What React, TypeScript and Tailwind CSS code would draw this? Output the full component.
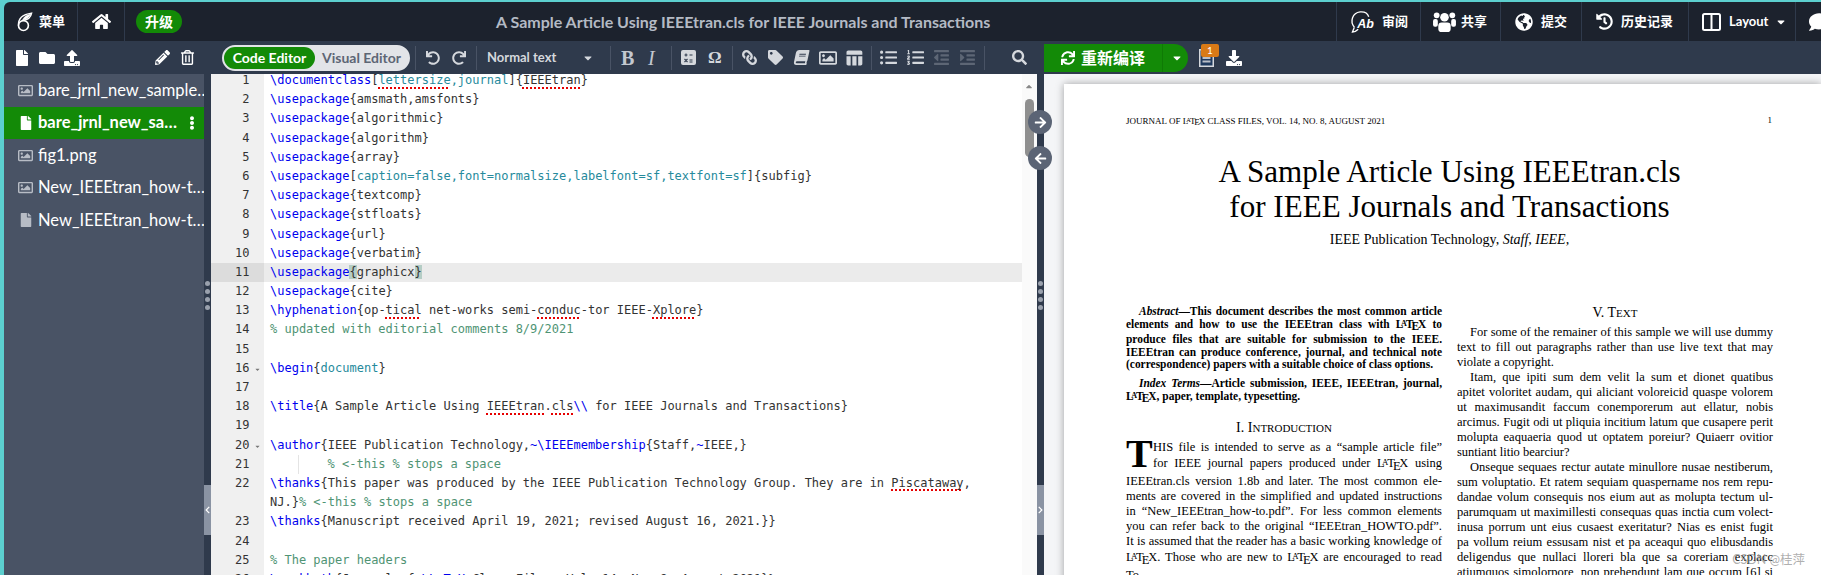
import React from 'react';
import {
  FaFile, FaFolder, FaUpload, FaPencilAlt, FaRegTrashAlt, FaHome, FaUndo, FaRedo, FaCaretDown, FaLink, FaTag, FaBook,
  FaRegImage, FaListUl, FaListOl, FaOutdent, FaIndent, FaSearch, FaSync, FaDownload, FaGlobeAmericas,
  FaHistory, FaComment, FaEllipsisV, FaArrowRight, FaArrowLeft, FaChevronLeft, FaChevronRight,
} from 'react-icons/fa';
import { MdTableChart } from 'react-icons/md';

function Logo() {
  return (
    <svg viewBox="0 0 24 28" className="w-[17px] h-[20px]" fill="none" stroke="white">
      <circle cx="10.500" cy="19" r="7" strokeWidth="2.300" />
      <path d="M3.500 19C3 11 8 3.500 22 1.500C21 7 17 11 10 11.500" strokeWidth="2" />
      <path d="M21 2.500C15 4 11 7 9 11C14 11 19 8 21 2.500Z" fill="white" strokeWidth="0.500" />
    </svg>
  );
}

function ReviewIcon() {
  return (
    <svg viewBox="0 0 27 24" className="w-[27px] h-[23px]" fill="none">
      <path d="M5 18C0 12 3 3 11 2C16 1.500 19 4 20 7M5 18L3 23C6 23 8 21 9 20" stroke="white" strokeWidth="1.400" />
      <text x="8" y="19" fill="white" fontSize="13" fontFamily="'Liberation Sans', sans-serif" fontStyle="italic">Ab</text>
    </svg>
  );
}

function UsersIcon() {
  return (
    <svg viewBox="0 0 24 22" className="w-[23px] h-[21px]" fill="white">
      <circle cx="12" cy="6.500" r="4.500" />
      <circle cx="3.800" cy="4.500" r="3" />
      <circle cx="20.200" cy="4.500" r="3" />
      <rect x="5.500" y="12" width="13" height="10" rx="3.500" />
      <rect x="0" y="8.500" width="5" height="8" rx="2" />
      <rect x="19" y="8.500" width="5" height="8" rx="2" />
    </svg>
  );
}

function ColumnsIcon() {
  return (
    <svg viewBox="0 0 19 18" className="w-[19px] h-[18px]" fill="none" stroke="white" strokeWidth="2">
      <rect x="1" y="1" width="17" height="16" rx="1.500" />
      <path d="M9.500 1v16" />
    </svg>
  );
}

function MathIcon() {
  return (
    <svg viewBox="0 0 15 15" className="w-[15px] h-[15px]">
      <rect width="15" height="15" rx="2" fill="#d5d8dd" />
      <path d="M3.500 5h3M5 3.500v3M8.500 5h3M3.500 9l3 3M6.500 9l-3 3M8.500 10h3M8.500 12h3" stroke="#2f3a4c" strokeWidth="1.100" />
    </svg>
  );
}

function LogsIcon() {
  return (
    <svg viewBox="0 0 15 18" className="w-[15px] h-[18px]">
      <rect x="0.750" y="0.750" width="13.500" height="16.500" fill="#1f3a5f" stroke="#d5d8dd" strokeWidth="1.500" />
      <path d="M3.500 9h8M3.500 12.500h8" stroke="#b9bec7" strokeWidth="2" />
    </svg>
  );
}

function NavItem({ w, icon, label }: { w: string; icon: React.ReactNode; label: React.ReactNode }) {
  return (
    <div className={`${w} shrink-0 h-full border-l border-[#2f3a4c] flex items-center pl-[12px] text-white text-[13px] font-bold`}>
      {icon}
      {label}
    </div>
  );
}

function TopBar() {
  return (
    <div className="h-[39px] shrink-0 bg-[#1c222d] flex items-center text-white rounded-tl-[6px]">
      <div className="w-[74px] h-full border-r border-[#2f3a4c] flex items-center pl-[12px] gap-[6px]">
        <Logo />
        <span className="text-[13px] font-bold">菜单</span>
      </div>
      <div className="w-[47px] h-full border-r border-[#2f3a4c] flex items-center justify-center">
        <FaHome className="text-[19px]" />
      </div>
      <div className="ml-[11px] w-[46px] h-[23px] rounded-full bg-[#138a07] flex items-center justify-center text-[14px] font-bold">升级</div>
      <div className="ml-[314px] text-[16px] font-bold text-[#b4bac4] whitespace-nowrap">A Sample Article Using IEEEtran.cls for IEEE Journals and Transactions</div>
      <div className="ml-auto flex h-full">
        <NavItem w="w-[84px]" icon={<ReviewIcon />} label={<span className="ml-[6px]">审阅</span>} />
        <NavItem w="w-[80px]" icon={<UsersIcon />} label={<span className="ml-[5px]">共享</span>} />
        <NavItem w="w-[81px]" icon={<FaGlobeAmericas className="text-[18px] ml-[2px]" />} label={<span className="ml-[8px]">提交</span>} />
        <NavItem w="w-[107px]" icon={<FaHistory className="text-[17px] ml-[2px]" />} label={<span className="ml-[8px]">历史记录</span>} />
        <NavItem w="w-[107px]" icon={<span className="ml-[1px] flex"><ColumnsIcon /></span>} label={<><span className="ml-[8px]">Layout</span><FaCaretDown className="ml-[7px] text-[12px]" /></>} />
        <div className="w-[26px] shrink-0 h-full border-l border-[#2f3a4c] flex items-center pl-[13px] text-white overflow-hidden">
          <FaComment className="text-[20px] shrink-0" />
        </div>
      </div>
    </div>
  );
}

function Sep({ ml }: { ml: string }) {
  return <div className={`${ml} w-px h-[24px] bg-[#495365] shrink-0`} />;
}

function ToolBar() {
  const tone = 'text-[#d5d8dd] shrink-0';
  return (
    <div className="h-[33px] shrink-0 bg-[#2f3a4c] flex items-center">
      <div className="w-[207px] shrink-0 flex items-center text-white pl-[10px]">
        <FaFile className="text-[16px]" />
        <FaFolder className="text-[16px] ml-[9px]" />
        <FaUpload className="text-[16px] ml-[9px]" />
        <FaPencilAlt className="text-[15px] ml-[75px]" />
        <FaRegTrashAlt className="text-[15px] ml-[10px]" />
      </div>
      <div className="w-[833px] shrink-0 flex items-center pl-[11px]">
        <div className="w-[188px] h-[26px] rounded-full bg-[#e2e4e8] flex items-center text-[14px] font-bold shrink-0 border-2 border-[#e2e4e8]">
          <div className="w-[91px] h-full rounded-full bg-[#138a07] text-white flex items-center justify-center">Code Editor</div>
          <div className="flex-1 text-[#5d6675] text-center">Visual Editor</div>
        </div>
        <Sep ml="ml-[5px]" />
        <FaUndo className={`${tone} text-[14px] ml-[10px]`} />
        <FaRedo className={`${tone} text-[14px] ml-[12px]`} />
        <Sep ml="ml-[10px]" />
        <span className="ml-[10px] text-[13px] font-bold text-[#d5d8dd] w-[69px] whitespace-nowrap">Normal text</span>
        <FaCaretDown className={`${tone} text-[12px] ml-[26px]`} />
        <Sep ml="ml-[16px]" />
        <span className="ml-[10px] w-[16px] text-[20px] font-bold text-[#c3c7cf] [font-family:'Liberation_Serif',serif]">B</span>
        <span className="ml-[11px] w-[12px] text-[20px] italic text-[#c3c7cf] [font-family:'Liberation_Serif',serif]">I</span>
        <Sep ml="ml-[11px]" />
        <div className="ml-[9px] shrink-0"><MathIcon /></div>
        <span className="ml-[12px] w-[14px] text-[17px] font-bold text-[#d5d8dd] [font-family:'Liberation_Serif',serif]">Ω</span>
        <Sep ml="ml-[10px]" />
        <FaLink className={`${tone} text-[15px] ml-[9px] -scale-x-100`} />
        <FaTag className={`${tone} text-[15px] ml-[11px]`} />
        <FaBook className={`${tone} text-[15px] ml-[11px] -skew-x-12`} />
        <FaRegImage className={`${tone} text-[18px] ml-[10px]`} />
        <MdTableChart className={`${tone} text-[20px] ml-[7px]`} />
        <Sep ml="ml-[7px]" />
        <FaListUl className={`${tone} text-[17px] ml-[8px]`} />
        <FaListOl className={`${tone} text-[17px] ml-[10px]`} />
        <FaOutdent className="text-[#5d6675] text-[17px] ml-[9px] shrink-0" />
        <FaIndent className="text-[#5d6675] text-[17px] ml-[9px] shrink-0" />
        <Sep ml="ml-[8px]" />
        <FaSearch className={`${tone} text-[15px] ml-[27px]`} />
      </div>
      <div className="flex-1 flex items-center">
        <div className="w-[144px] h-[28px] bg-[#138a07] rounded-r-full flex items-center text-white shrink-0">
          <FaSync className="ml-[17px] text-[14px]" />
          <span className="ml-[6px] w-[66px] text-[16px] font-bold whitespace-nowrap">重新编译</span>
          <div className="ml-[15px] w-px h-full bg-[#0f7a05]" />
          <FaCaretDown className="ml-[8px] text-[12px]" />
        </div>
        <div className="relative ml-[11px] flex">
          <LogsIcon />
          <span className="absolute -top-[5px] left-[2px] w-[18px] h-[13px] rounded-[2px] bg-[#d97a16] text-white text-[10px] leading-[13px] text-center">1</span>
        </div>
        <FaDownload className="ml-[12px] text-white text-[16px]" />
      </div>
    </div>
  );
}

const File = ({ icon, label, active, more }: { icon: React.ReactNode; label: string; active?: boolean; more?: boolean }) => (
  <div className={`h-[32.500px] flex items-center pl-[14px] text-[16.500px] whitespace-nowrap ${active ? 'bg-[#138a07] text-white font-bold' : 'text-white'}`}>
    <span className={`w-[20px] shrink-0 ${active ? 'text-white' : 'text-[#b7bcc5]'}`}>{icon}</span>
    <span className="flex-1 overflow-hidden">{label}</span>
    {more && <FaEllipsisV className="mr-[5px] text-[14px]" />}
  </div>
);

function Sidebar() {
  return (
    <div className="w-[200px] shrink-0 bg-[#495365]">
      <File icon={<FaRegImage className="text-[15px]" />} label="bare_jrnl_new_sample…" />
      <File active more icon={<FaFile className="text-[14px] ml-[1px]" />} label="bare_jrnl_new_sa…" />
      <File icon={<FaRegImage className="text-[15px]" />} label="fig1.png" />
      <File icon={<FaRegImage className="text-[15px]" />} label="New_IEEEtran_how-t…" />
      <File icon={<FaFile className="text-[14px] ml-[1px]" />} label="New_IEEEtran_how-t…" />
    </div>
  );
}

function Splitter({ open }: { open?: boolean }) {
  return (
    <div className="w-[7px] shrink-0 bg-[#2f3a4c] flex flex-col items-center">
      <div className="mt-[207px] flex flex-col gap-[3px]">
        <div className="w-[5px] h-[5px] rounded-full bg-[#9aa1ad]" />
        <div className="w-[5px] h-[5px] rounded-full bg-[#9aa1ad]" />
        <div className="w-[5px] h-[5px] rounded-full bg-[#9aa1ad]" />
        <div className="w-[5px] h-[5px] rounded-full bg-[#9aa1ad]" />
      </div>
      <div className="mt-[175px] w-full h-[50px] bg-[#8a93a3] flex items-center justify-center text-white">
        {open ? <FaChevronRight className="text-[8px]" /> : <FaChevronLeft className="text-[8px]" />}
      </div>
    </div>
  );
}

const Kw = ({ children }: { children: React.ReactNode }) => <span className="text-[#0000ee]">{children}</span>;
const Arg = ({ children }: { children: React.ReactNode }) => <span className="text-[#268a9c]">{children}</span>;
const Cm = ({ children }: { children: React.ReactNode }) => <span className="text-[#4f9474]">{children}</span>;
const Sp = ({ children }: { children: React.ReactNode }) => (
  <span className="underline decoration-dotted decoration-[#e60000] decoration-2 underline-offset-[3px]">{children}</span>
);
const Use = ({ name }: { name: string }) => (
  <>
    <Kw>\usepackage</Kw>
    {`{${name}}`}
  </>
);

const lines: { n?: number; fold?: boolean; active?: boolean; c: React.ReactNode }[] = [
  { n: 1, c: <><Kw>\documentclass</Kw>[<Arg><Sp>lettersize</Sp>,journal</Arg>]{'{'}<Sp>IEEEtran</Sp>{'}'}</> },
  { n: 2, c: <Use name="amsmath,amsfonts" /> },
  { n: 3, c: <Use name="algorithmic" /> },
  { n: 4, c: <Use name="algorithm" /> },
  { n: 5, c: <Use name="array" /> },
  { n: 6, c: <><Kw>\usepackage</Kw>[<Arg>caption=false,font=normalsize,labelfont=sf,textfont=sf</Arg>]{'{subfig}'}</> },
  { n: 7, c: <Use name="textcomp" /> },
  { n: 8, c: <Use name="stfloats" /> },
  { n: 9, c: <Use name="url" /> },
  { n: 10, c: <Use name="verbatim" /> },
  { n: 11, active: true, c: <><Kw>\usepackage</Kw><span className="bg-[#b5cdc5]">{'{'}</span>graphicx<span className="bg-[#b5cdc5]">{'}'}</span></> },
  { n: 12, c: <Use name="cite" /> },
  { n: 13, c: <><Kw>\hyphenation</Kw>{'{op-'}<Sp>tical</Sp>{' net-works semi-'}<Sp>conduc</Sp>{'-tor IEEE-'}<Sp>Xplore</Sp>{'}'}</> },
  { n: 14, c: <Cm>% updated with editorial comments 8/9/2021</Cm> },
  { n: 15, c: '' },
  { n: 16, fold: true, c: <><Kw>\begin</Kw>{'{'}<Arg>document</Arg>{'}'}</> },
  { n: 17, c: '' },
  { n: 18, c: <><Kw>\title</Kw>{'{A Sample Article Using '}<Sp>IEEEtran</Sp>.<Sp>cls</Sp><Kw>\\</Kw>{' for IEEE Journals and Transactions}'}</> },
  { n: 19, c: '' },
  { n: 20, fold: true, c: <><Kw>\author</Kw>{'{IEEE Publication Technology,'}<Kw>~\IEEEmembership</Kw>{'{Staff,'}<Kw>~</Kw>{'IEEE,}'}</> },
  { n: 21, c: <><span className="inline-block w-[28.8px] h-[19px] border-r border-[#e4e4e4] align-top" /><span className="inline-block w-[28.8px]" /><Cm>% &lt;-this % stops a space</Cm></> },
  { n: 22, c: <><Kw>\thanks</Kw>{'{This paper was produced by the IEEE Publication Technology Group. They are in '}<Sp>Piscataway</Sp>,</> },
  { c: <>NJ.{'}'}<Cm>% &lt;-this % stops a space</Cm></> },
  { n: 23, c: <><Kw>\thanks</Kw>{'{Manuscript received April 19, 2021; revised August 16, 2021.}}'}</> },
  { n: 24, c: '' },
  { n: 25, c: <Cm>% The paper headers</Cm> },
  { n: 26, c: <><Kw>\markboth</Kw>{'{Journal of '}<Kw>\LaTeX</Kw>{' Class Files,'}<Kw>~</Kw>{'Vol. 14, No. 8, August 2021}%'}</> },
];

function Editor() {
  return (
    <div className="w-[826px] shrink-0 bg-white flex overflow-hidden">
      <div className="w-[811px] shrink-0 -mt-[3px] text-[12px] leading-[19.2px] text-[#333] whitespace-pre [font-family:'DejaVu_Sans_Mono',monospace]">
        {lines.map((l, i) => (
          <div key={i} className={`flex h-[19.2px] ${l.active ? 'bg-[#ebebeb]' : ''}`}>
            <div className={`w-[53px] shrink-0 flex ${l.active ? 'bg-[#dcdcdc]' : 'bg-[#f0f0f0]'}`}>
              <span className="w-[38.500px] text-right">{l.n}</span>
              {l.fold && <FaCaretDown className="ml-[4px] mt-[7px] text-[7px] text-[#777]" />}
            </div>
            <div className="pl-[6px]">{l.c}</div>
          </div>
        ))}
      </div>
      <div className="flex-1 bg-[#fafafa] flex flex-col items-center pr-[1px]">
        <FaCaretDown className="mt-[8px] text-[10px] text-[#888] rotate-180" />
        <div className="mt-[7px] w-[9px] h-[58px] rounded-full bg-[#8f8f8f]" />
      </div>
    </div>
  );
}

function LaTeX() {
  return (
    <span className="whitespace-nowrap">
      L<span className="text-[0.7em] align-[0.25em] -ml-[0.3em]">A</span>
      <span className="-ml-[0.1em]">T</span>
      <span className="align-[-0.2em] -ml-[0.15em]">E</span>
      <span className="-ml-[0.1em]">X</span>
    </span>
  );
}

const J = ({ children, indent, end }: { children: React.ReactNode; indent?: boolean; end?: boolean }) => (
  <div className={`${indent ? 'pl-[13px]' : ''} ${end ? '' : 'text-justify [text-align-last:justify]'}`}>{children}</div>
);

function Paper() {
  return (
    <div className="flex-1 bg-[#f4f5f7] pt-[10px] pl-[20px] overflow-hidden">
      <div className="h-[600px] bg-white shadow-[0_0_8px_rgba(0,0,0,0.35)] pl-[62px] pt-[30px] text-black [font-family:'Liberation_Serif',serif]">
        <div className="w-[647px]">
          <div className="flex justify-between text-[9px] leading-[12px] h-[12px]">
            <span>JOURNAL OF <LaTeX /> CLASS FILES, VOL. 14, NO. 8, AUGUST 2021</span>
            <span className="mr-[1px]">1</span>
          </div>
          <div className="mt-[28px] text-center text-[31.100px] leading-[35px]">
            <div>A Sample Article Using IEEEtran.cls</div>
            <div>for IEEE Journals and Transactions</div>
          </div>
          <div className="mt-[8px] text-center text-[14px] leading-[16px]">
            IEEE Publication Technology, <i>Staff, IEEE,</i>
          </div>
          <div className="mt-[57px] flex gap-[15px] items-start">
            <div className="w-[316px] shrink-0">
              <div className="font-bold text-[11.450px] leading-[12.800px]">
                <J indent><i>Abstract</i>—This document describes the most common article</J>
                <J>elements and how to use the IEEEtran class with <LaTeX /> to</J>
                <J>produce files that are suitable for submission to the IEEE.</J>
                <J>IEEEtran can produce conference, journal, and technical note</J>
                <J end>(correspondence) papers with a suitable choice of class options.</J>
                <div className="mt-[6px]">
                  <J indent><i>Index Terms</i>—Article submission, IEEE, IEEEtran, journal,</J>
                  <J end><LaTeX />, paper, template, typesetting.</J>
                </div>
              </div>
              <div className="mt-[15px] text-center text-[14px] leading-[15px]">I. I<span className="text-[11px]">NTRODUCTION</span></div>
              <div className="mt-[4px] text-[12.500px] leading-[15px]">
                <span className="float-left w-[27px] h-[30px] text-[40px] leading-[30px] font-bold -mt-[1px]">T</span>
                <J>HIS file is intended to serve as a “sample article file”</J>
                <J>for IEEE journal papers produced under <LaTeX /> using</J>
                <J>IEEEtran.cls version 1.8b and later. The most common ele-</J>
                <J>ments are covered in the simplified and updated instructions</J>
                <J>in “New_IEEEtran_how-to.pdf”. For less common elements</J>
                <J>you can refer back to the original “IEEEtran_HOWTO.pdf”.</J>
                <J>It is assumed that the reader has a basic working knowledge of</J>
                <J><LaTeX />. Those who are new to <LaTeX /> are encouraged to read To-</J>
                <J>bias Oetiker’s “The Not So Short Introduction to <LaTeX />,” avail-</J>
                <J>able at: http://tug.ctan.org/info/lshort/english/lshort.pdf which</J>
              </div>
            </div>
            <div className="w-[316px] shrink-0 text-[12.500px] leading-[15px]">
              <div className="text-center mb-[4px] text-[14px]">V. T<span className="text-[11px]">EXT</span></div>
              <J indent>For some of the remainer of this sample we will use dummy</J>
              <J>text to fill out paragraphs rather than use live text that may</J>
              <J end>violate a copyright.</J>
              <J indent>Itam, que ipiti sum dem velit la sum et dionet quatibus</J>
              <J>apitet voloritet audam, qui aliciant voloreicid quaspe volorem</J>
              <J>ut maximusandit faccum conemporerum aut ellatur, nobis</J>
              <J>arcimus. Fugit odi ut pliquia incitium latum que cusapere perit</J>
              <J>molupta eaquaeria quod ut optatem poreiur? Quiaerr ovitior</J>
              <J end>suntiant litio bearciur?</J>
              <J indent>Onseque sequaes rectur autate minullore nusae nestiberum,</J>
              <J>sum voluptatio. Et ratem sequiam quaspername nos rem repu-</J>
              <J>dandae volum consequis nos eium aut as molupta tectum ul-</J>
              <J>parumquam ut maximillesti consequas quas inctia cum volect-</J>
              <J>inusa porrum unt eius cusaest exeritatur? Nias es enist fugit</J>
              <J>pa vollum reium essusam nist et pa aceaqui quo elibusdandis</J>
              <J>deligendus que nullaci lloreri bla que sa coreriam explacc</J>
              <J>atiumquos simolorpore, non prehendunt lam que occum [6] si</J>
            </div>
          </div>
        </div>
      </div>
    </div>
  );
}

export default function App() {
  return (
    <div className="w-[1821px] h-[575px] bg-[#5ccfcf] pt-[2px] pl-[4px] overflow-hidden [font-family:Lato,'Noto_Sans_CJK_SC',sans-serif]">
      <div className="relative h-full flex flex-col">
        <TopBar />
        <ToolBar />
        <div className="flex-1 flex min-h-0">
          <Sidebar />
          <Splitter />
          <Editor />
          <Splitter open />
          <Paper />
        </div>
        {/* pane toggles sit over the splitter */}
        <div className="absolute left-[1024px] top-[108px] w-[24px] h-[24px] rounded-full bg-[#5b6475] flex items-center justify-center text-white">
          <FaArrowRight className="text-[13px]" />
        </div>
        <div className="absolute left-[1024px] top-[144px] w-[24px] h-[24px] rounded-full bg-[#5b6475] flex items-center justify-center text-white">
          <FaArrowLeft className="text-[13px]" />
        </div>
        <div className="absolute right-[16px] bottom-[5px] text-[12.500px] text-[#9a9a9a]/80">CSDN @桂萍</div>
      </div>
    </div>
  );
}
